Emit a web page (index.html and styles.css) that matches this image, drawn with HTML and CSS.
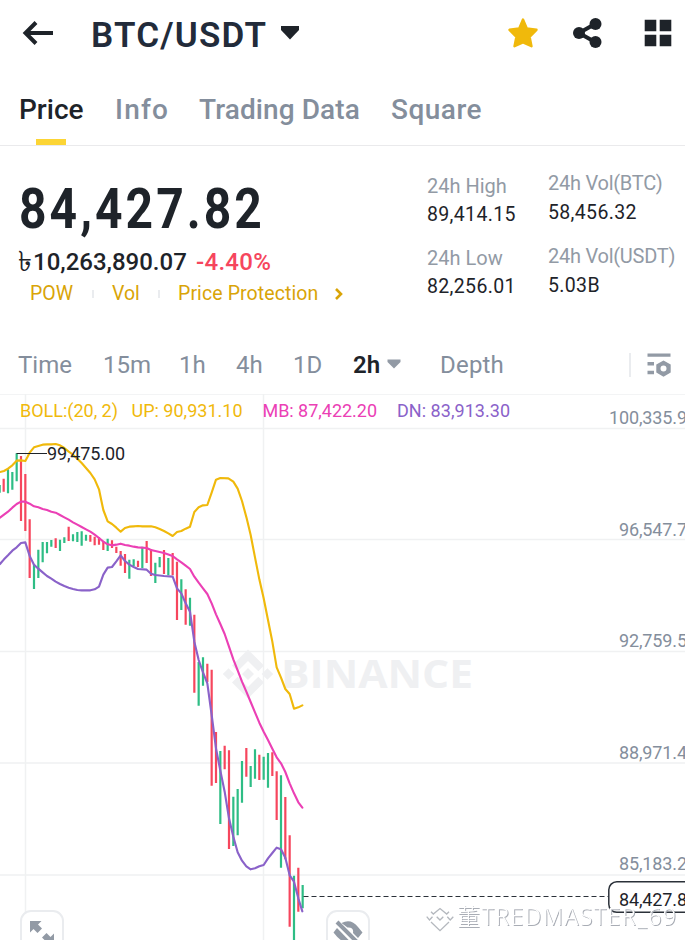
FILE: index.html
```html
<!DOCTYPE html>
<html lang="en">
<head>
<meta charset="utf-8">
<title>BTC/USDT</title>
<link rel="stylesheet" href="styles.css">
</head>
<body>
<header class="topbar">
  <svg class="back" width="32" height="26" viewBox="0 0 32 26"><path d="M3 13H31M14 2.500L3.500 13L14 23.500" fill="none" stroke="#1e2329" stroke-width="4"/></svg>
  <h1 class="pair">BTC/USDT</h1>
  <svg class="caret" width="20" height="16" viewBox="0 0 20 16"><path d="M1 1H19V5L10 14.500L1 5Z" fill="#1e2329"/></svg>
  <div class="actions">
    <svg width="32" height="32" viewBox="0 0 32 32"><path d="M16 2.500L19.800 11.500L29.500 12.800L22.600 19.800L24.500 29.200L16 25.300L7.500 29.200L9.400 19.800L2.500 12.800L12.200 11.500Z" fill="#f0b90b" stroke="#f0b90b" stroke-width="2.400" stroke-linejoin="round"/></svg>
    <svg width="30" height="32" viewBox="0 0 30 32"><path d="M23 7L7 16L23 25" fill="none" stroke="#1e2329" stroke-width="4"/><circle cx="23.500" cy="7" r="6" fill="#1e2329"/><circle cx="7" cy="16" r="6" fill="#1e2329"/><circle cx="23.500" cy="25" r="6" fill="#1e2329"/></svg>
    <svg width="28" height="28" viewBox="0 0 28 28"><path d="M.7.700H12.300V12.300H.7ZM15.700.700H27.300V12.300H15.700ZM.7 15.700H12.300V27.300H.7ZM15.700 15.700H27.300V27.300H15.700Z" fill="#1e2329"/></svg>
  </div>
</header>

<nav class="tabs">
  <a class="tab active"><span>Price</span></a>
  <a class="tab info"><span>Info</span></a>
  <a class="tab trading"><span>Trading Data</span></a>
  <a class="tab square"><span>Square</span></a>
</nav>

<section class="summary">
  <div class="quote">
    <div class="last"><span>84,427.82</span></div>
    <div class="fiat"><span class="taka">৳</span><span class="amount">10,263,890.07</span><span class="change">-4.40%</span></div>
    <div class="tags">
      <span class="pow">POW</span><i></i><span class="vol">Vol</span><i></i><span class="protect">Price Protection</span>
      <svg width="10" height="12" viewBox="0 0 10 12"><path d="M2 1L7 6L2 11" fill="none" stroke="#d9a407" stroke-width="2.600"/></svg>
    </div>
  </div>
  <dl class="stats first">
    <dt class="s-high">24h High</dt><dd>89,414.15</dd>
    <dt class="s-low">24h Low</dt><dd>82,256.01</dd>
  </dl>
  <dl class="stats second">
    <dt class="s-btc">24h Vol(BTC)</dt><dd>58,456.32</dd>
    <dt class="s-usdt">24h Vol(USDT)</dt><dd>5.03B</dd>
  </dl>
</section>

<nav class="intervals">
  <span class="c-time">Time</span><span class="c-15">15m</span><span>1h</span><span>4h</span><span class="c-day">1D</span>
  <span class="selected">2h</span>
  <svg class="more" width="14" height="10" viewBox="0 0 14 10"><path d="M.5.500H13.500V3L7 9.500L.5 3Z" fill="#929aa5"/></svg>
  <span class="c-depth">Depth</span>
  <i class="split"></i>
  <svg class="settings" width="25" height="26" viewBox="0 0 25 26"><path d="M.5 1.500H23.500V4.800H.5ZM.5 10H7V13.400H.5ZM.5 18.800H7V22.200H.5Z" fill="#929aa5"/><path fill-rule="evenodd" d="M16.500 8.500L23.700 12.600V20.400L16.500 24.700L9.300 20.400V12.600ZM16.500 13.500A3 3 0 1 0 16.500 19.500A3 3 0 1 0 16.500 13.500Z" fill="#929aa5"/></svg>
</nav>

<main class="chart">
<svg class="plot" width="685" height="546" viewBox="0 0 685 546">
  <g class="grid">
    <path d="M0 0H685M0 34.500H685M0 145.500H685M0 257.500H685M0 369H685M0 481H685"/>
    <path d="M25.500 0V546M263.500 0V546"/>
  </g>
  <g class="brand">
    <path d="M248 255.500L264 271.500L258.300 277.200L248 266.900L237.700 277.200L232 271.500ZM248 274L254 280L248 286L242 280L248 274ZM228.600 274.200L234.400 280L228.600 285.800L222.800 280ZM267.400 274.200L273.200 280L267.400 285.800L261.600 280ZM232 288.500L237.700 282.800L248 293.100L258.300 282.800L264 288.500L248 304.500Z"/>
    <text x="281" y="294" textLength="192" lengthAdjust="spacingAndGlyphs">BINANCE</text>
  </g>
  <g class="legend">
    <text class="up" x="20" y="23" textLength="98">BOLL:(20, 2)</text>
    <text class="up" x="131.500" y="23" textLength="111">UP: 90,931.10</text>
    <text class="mb" x="262.500" y="23" textLength="114.500">MB: 87,422.20</text>
    <text class="dn" x="397" y="23" textLength="113">DN: 83,913.30</text>
  </g>
  <g class="axis">
    <text x="609" y="30" textLength="78">100,335.9</text>
    <text x="619" y="142" textLength="68">96,547.7</text>
    <text x="619" y="253" textLength="68">92,759.5</text>
    <text x="619" y="365" textLength="68">88,971.4</text>
    <text x="619" y="476" textLength="68">85,183.2</text>
  </g>
  <g transform="scale(.33333)">
    <g transform="translate(0 108)">
      <path class="bar buy" d="M-1 165V188M24 118V190M37 126V179M50 70V154M102 403V477M115 359V444M128 336V397M141 336V370M154 330V350M180 329V363M193 322V339M219 313V334M232 306V336M245 304V347M258 314V332M323 326V363M388 389V446M401 388V408M427 350V414M466 398V459M479 381V412M505 384V436"/>
      <path class="bar sell" d="M11 146V185M63 78V273M76 132V303M89 268V444M167 325V354M206 290V333M271 315V335M284 320V346M297 322V344M310 334V360M336 331V354M349 350V369M362 363V407M375 372V429M414 392V411M440 333V399M453 357V438M492 360V432"/>
    </g>
    <g transform="translate(420 198)">
      <path class="bar sell" d="M98 279V346M111 305V480M137 388V494M163 464V698M202 611V666M215 629V977"/>
      <path class="bar buy" d="M124 358V450M150 413V497M176 606V737M189 592V677"/>
    </g>
    <g transform="translate(540 738)">
      <path class="bar sell" d="M108 276V429M134 317V388M147 331V627M199 324V410M238 344V420M277 337V408M290 394V540M316 471V658M329 586V860M355 683V815"/>
      <path class="bar buy" d="M121 333V552M160 470V618M173 447V586M186 363V488M212 378V441M225 328V416M251 350V419M264 339V443M303 406V683M342 707V920M368 735V805"/>
    </g>
    <path class="line up" d="M0 234L12 231L24 224L37 214L50 200L63 199L76 201L82 190L89 176L102 160L115 156L128 152L141 151L154 151L167 150L180 154L193 162L206 173L219 182L232 194L245 207L258 222L271 237L284 256L297 286L303 315L310 348L323 382L336 390L349 401L362 413L375 402L388 398L401 397L414 396L427 397L453 397L466 400L479 405L492 411L505 418L518 426L531 414L544 411L557 404L570 398L583 354L596 340L609 334L622 333L635 296L648 257L661 252L685 253L700 263L713 284L726 321L740 373L752 423L765 490L778 556L791 613L804 678L817 743L830 820L843 851L856 885L869 900L882 944L895 940L907 934"/>
    <path class="line mb" d="M0 371L12 362L24 353L37 341L50 330L63 323L76 323L89 329L102 337L115 340L128 345L141 348L154 353L167 356L180 363L193 370L206 377L219 385L232 392L245 399L258 406L271 413L284 422L297 432L310 443L323 451L336 454L349 452L362 449L375 453L388 455L401 458L414 460L440 462L453 468L466 471L492 477L518 486L531 496L544 505L557 515L570 525L583 548L596 566L609 583L622 600L635 628L648 661L661 690L674 720L687 758L700 796L713 829L726 863L739 893L752 924L765 955L778 986L791 1013L804 1038L817 1064L830 1090L843 1108L856 1134L869 1168L882 1198L895 1225L907 1241"/>
    <path class="line dn" d="M0 510L12 496L24 484L37 470L50 460L63 447L76 445L89 486L102 512L115 524L128 535L141 546L154 554L167 563L180 570L193 576L206 581L219 585L232 588L245 589L271 589L284 586L297 578L310 542L323 521L336 519L349 502L362 484L375 501L388 512L401 519L414 525L440 527L453 539L466 543L492 546L518 548L531 583L544 598L557 628L570 653L583 743L596 798L609 835L622 868L635 963L648 1063L661 1130L674 1193L687 1273L700 1328L713 1375L726 1400L739 1417L752 1426L765 1423L778 1417L791 1413L804 1393L817 1377L830 1361L843 1366L856 1391L869 1444L882 1463L895 1513L907 1552"/>
  </g>
  <path class="leader" d="M16.500 59.500H47"/>
  <text class="peak" x="47" y="66" textLength="78">99,475.00</text>
  <path class="current" d="M303.500 502.500H609"/>
  <rect class="tag" x="608.800" y="487.800" width="100" height="30.500" rx="8"/>
  <text class="tagtext" x="619" y="512" textLength="68">84,427.8</text>
  <g class="credit">
    <path d="M431 517.700L433.300 520L440 514.500L446.700 520L449 517.700M426.700 522.700L429.500 526L432.500 522.700M436.700 522.700L440 526L443.300 522.700M447.300 522.700L450.200 526L453.300 522.700M431 528L440 536.700L449 528"/>
    <text x="457" y="531" textLength="219">董TREDMASTER_69</text>
  </g>
</svg>
<div class="tools">
  <button class="tool" aria-label="Expand"><svg width="26" height="26" viewBox="0 0 26 26"><path d="M1 1H12.500L9 4.500L13 8.500L8.500 13L4.500 9L1 12.500ZM25 25H13.500L17 21.500L13 17.500L17.500 13L21.500 17L25 13.500Z" fill="#929aa5"/></svg></button>
  <button class="tool" aria-label="Hide"><svg width="30" height="26" viewBox="0 0 30 26"><path d="M4 2L27 25" stroke="#929aa5" stroke-width="4"/><path d="M8.500 3Q18-2 25 7L29.500 12.500L25 18L20 13Q21 7 14.500 7.500Z" fill="#929aa5"/><path d="M4 8L.5 12.500Q10 25 19 23.500Z" fill="#929aa5"/></svg></button>
</div>
</main>
</body>
</html>
```
FILE: styles.css
```css
* { box-sizing: border-box; }
body {
  margin: 0;
  width: 685px;
  height: 940px;
  overflow: hidden;
  background: #fff;
  color: #1e2329;
  font-family: Roboto, "Noto Sans", sans-serif;
}
svg { display: block; flex: none; }

.topbar { display: flex; align-items: center; height: 66px; padding: 0 13px 0 22px; }
.pair { margin: 5px 0 0 37px; width: 187px; font-size: 35px; font-weight: 600; line-height: 40px; letter-spacing: 1.2px; color: #222b3a; white-space: nowrap; }
.caret { margin-left: 2px; }
.actions { display: flex; align-items: center; margin-left: auto; }
.actions svg:nth-child(2) { margin-left: 33px; }
.actions svg:nth-child(3) { margin-left: 42px; }

.tabs { display: flex; height: 80px; padding-left: 19px; border-bottom: 1px solid #eaeaec; font-size: 28px; font-weight: 500; line-height: 40px; white-space: nowrap; }
.tab { padding-top: 24px; color: #848e9c; }
.active { width: 95px; color: #1e2329; }
.active::after { content: ""; display: block; width: 30px; height: 6px; margin: 9px 0 0 17px; background: #fcd535; }
.info { width: 85px; padding-left: 1px; letter-spacing: 1.2px; }
.trading { width: 192px; letter-spacing: .1px; }
.square { letter-spacing: .5px; }

.summary { display: flex; height: 192px; }
.quote { width: 408px; margin-left: 19px; padding-top: 32px; white-space: nowrap; }
.last { font-size: 55.5px; font-weight: 700; line-height: 64px; }
.last span { display: inline-block; letter-spacing: 3.5px; transform: scaleX(.865); transform-origin: left; }
.fiat { display: flex; margin-top: 4px; font-size: 24px; font-weight: 500; line-height: 32px; }
.taka { width: 15px; margin-left: -1px; font-size: 28px; }
.amount { width: 163px; }
.change { letter-spacing: .3px; color: #f6465d; }
.tags { display: flex; align-items: center; margin: 2px 0 0 11px; font-size: 19.5px; line-height: 28px; color: #d9a407; }
.tags i { width: 2px; height: 8px; background: #eaecef; }
.pow { width: 62px; }
.vol { width: 46px; margin-left: 18px; }
.protect { width: 156px; margin-left: 18px; letter-spacing: .1px; }
.stats { margin: 0; font-size: 20px; line-height: 28px; white-space: nowrap; }
.stats dt { color: #929aa5; }
.stats dd { margin: 0 0 15px; padding-top: 1px; font-size: 19.5px; letter-spacing: .35px; }
.first { width: 121px; padding-top: 26px; }
.second { padding-top: 23px; }
.second dd { padding-top: 2px; }
.second dt { letter-spacing: -.25px; }

.intervals { display: flex; align-items: center; height: 56px; padding: 0 12px 2px 18px; font-size: 24px; line-height: 32px; color: #848e9c; white-space: nowrap; }
.intervals span { flex: none; width: 57px; }
.intervals .c-time { width: 85px; }
.intervals .c-15 { width: 76px; }
.intervals .c-day { width: 60px; }
.intervals .selected { width: 34px; font-weight: 600; color: #1e2329; }
.intervals .c-depth { width: 189px; margin-left: 39px; letter-spacing: .2px; }
.more { margin-top: -2px; }
.split { width: 2px; height: 24px; background: #eaecef; }
.settings { margin-left: 16px; }

.chart { position: relative; height: 546px; }
.plot text { font-family: Roboto, sans-serif; font-size: 18px; font-stretch: 90%; }
.grid path { fill: none; stroke: #f0f1f2; stroke-width: 1.5; }
.brand { fill: #eff0f2; }
.plot .brand text { font-family: "Open Sans", sans-serif; font-size: 39px; font-weight: 700; font-stretch: 100%; }
.legend .up { fill: #f0b90b; }
.legend .mb { fill: #eb40b5; }
.legend .dn { fill: #8a62c9; }
.axis { fill: #848e9c; }
.bar { fill: none; stroke-width: 6.6; }
.buy { stroke: #2ebd85; }
.sell { stroke: #f6465d; }
.line { fill: none; stroke-width: 6.4; stroke-linejoin: round; stroke-linecap: round; }
.line.up { stroke: #f0b90b; }
.line.mb { stroke: #eb40b5; }
.line.dn { stroke: #8a62c9; }
.leader { stroke: #1e2329; }
.peak, .tagtext { fill: #1e2329; }
.current { stroke: #2b3139; stroke-dasharray: 5 3; }
.tag { fill: #fff; stroke: #2b3139; stroke-width: 1.5; }
.credit path { fill: none; stroke: #b4b8be; stroke-width: 1.3; }
.plot .credit text { font-family: "Noto Sans", "Noto Sans CJK SC", sans-serif; font-size: 23px; font-weight: 300; font-stretch: 100%; fill: #fff; filter: drop-shadow(1px 1px 0 #a9adb5); }
.tools { position: absolute; left: 20px; top: 516px; display: flex; gap: 262px; }
.tool { display: flex; justify-content: center; width: 44px; height: 44px; padding: 8px 0 0; border: 2px solid #eaecef; border-radius: 11px; background: #fff; }
```
